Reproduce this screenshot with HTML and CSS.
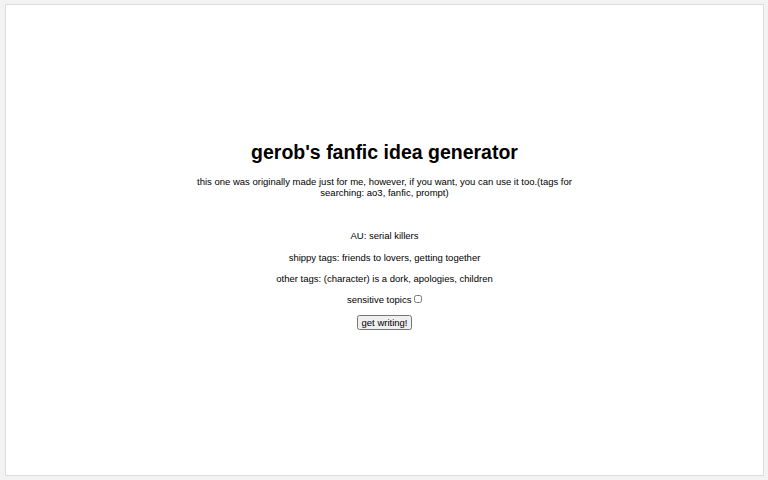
FILE: index.html
```html
<!doctype html>
<html lang="en">
  <head>
    <meta charset="UTF-8" />
    <title>gerob's fanfic idea generator</title>
    <link rel="stylesheet" href="styles.css">
  </head>
  <body>
    <div class="frame">
      <div class="content">
        <h1>gerob's fanfic idea generator</h1>
        <p class="intro">this one was originally made just for me, however, if you want, you can use it too.(tags for searching: ao3, fanfic, prompt)</p>
        <div class="results">
          <p id="au">AU: serial killers</p>
          <p id="shippy">shippy tags: friends to lovers, getting together</p>
          <p id="other">other tags: (character) is a dork, apologies, children</p>
          <p>
            <label for="sensitive">sensitive topics</label>
            <input type="checkbox" id="sensitive" />
          </p>
          <button id="generate">get writing!</button>
        </div>
      </div>
    </div>
  </body>
</html>
```
FILE: styles.css
```css
html,
body {
  height: 100%;
  margin: 0;
}
body {
  background: #f3f3f3;
  font-family: 'Liberation Sans', Arial, sans-serif;
  color: #000;
  padding: 4px 4px 4px 5px;
  box-sizing: border-box;
}
.frame {
  height: 100%;
  box-sizing: border-box;
  background: #fff;
  border: 1px solid #dcdcdc;
  padding-bottom: 10px;
  display: flex;
  align-items: center;
  justify-content: center;
}
.content {
  width: 384px;
  text-align: center;
  font-size: 9.5px;
}
h1 {
  font-size: 19.5px;
  margin: 0 0 12px;
}
.intro {
  margin: 0 0 32px;
  line-height: 11px;
}
.results p {
  margin: 0 0 10px;
}
.results p#au {
  margin-bottom: 11px;
}
input[type='checkbox'] {
  width: 8px;
  height: 8px;
  margin: 0;
  vertical-align: 0;
}
button {
  font-family: inherit;
  font-size: 9.5px;
  padding: 0 3px;
}
```
